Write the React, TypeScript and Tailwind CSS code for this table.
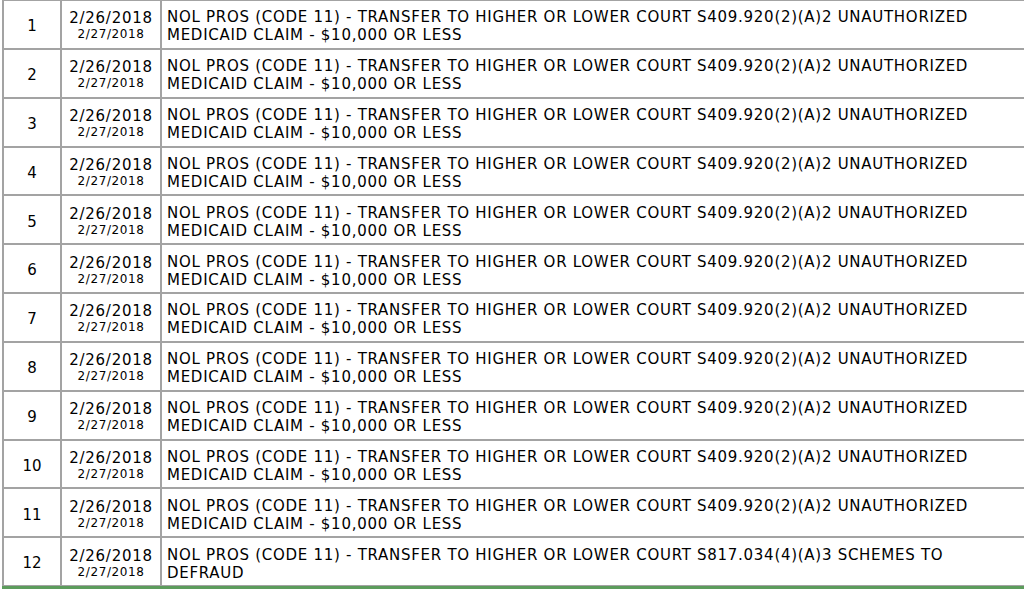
import React from "react";

const CHARGE_A =
  "NOL PROS (CODE 11) - TRANSFER TO HIGHER OR LOWER COURT S409.920(2)(A)2 UNAUTHORIZED MEDICAID CLAIM - $10,000 OR LESS";
const CHARGE_B =
  "NOL PROS (CODE 11) - TRANSFER TO HIGHER OR LOWER COURT S817.034(4)(A)3 SCHEMES TO DEFRAUD";

const rows = Array.from({ length: 12 }, (_, i) => ({
  seq: i + 1,
  filed: "2/26/2018",
  disposed: "2/27/2018",
  text: i === 11 ? CHARGE_B : CHARGE_A,
}));

export default function App() {
  return (
    <div
      className="w-[1024px] h-[589px] overflow-hidden bg-white text-black"
      style={{ fontFamily: '"DejaVu Sans", Verdana, sans-serif' }}
    >
      <div className="ml-[2px] w-[1060px]">
        <table className="w-full border-separate border-spacing-0 border-l border-[#a3a3a3]">
          <tbody>
            {rows.map((r) => (
              <tr key={r.seq} className="h-[48.85px]">
                <td className="w-[58px] border border-[#a3a3a3] pt-[4px] text-center align-middle text-[15px]">
                  {r.seq}
                </td>
                <td className="w-[100px] border border-[#a3a3a3] pt-[4px] text-center align-middle leading-4">
                  <div className="text-[15px] tracking-[0.75px]">{r.filed}</div>
                  <div className="text-[12px] tracking-[0.6px]">{r.disposed}</div>
                </td>
                <td className="border border-[#a3a3a3] pt-[4px] pl-[5px] align-middle text-[15px] leading-[18px] tracking-[0.72px]">
                  <div className="w-[834px]">{r.text}</div>
                </td>
              </tr>
            ))}
          </tbody>
        </table>
        <div className="h-[3px] bg-[#5c9c5c]" />
      </div>
    </div>
  );
}
